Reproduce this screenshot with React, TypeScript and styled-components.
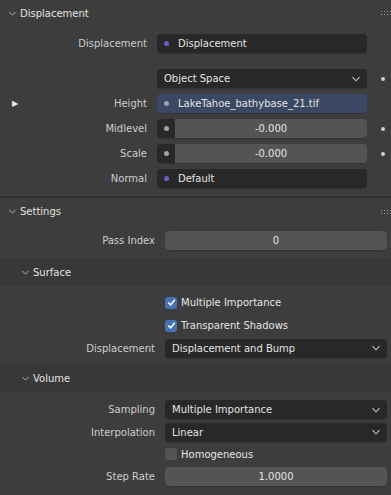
import { createGlobalStyle } from "styled-components";
import styled from "styled-components";

const GlobalStyle = createGlobalStyle`
  html, body {
    margin: 0;
    padding: 0;
    background: #3d3d3d;
  }
  body {
    font-family: "DejaVu Sans", "Liberation Sans", sans-serif;
    font-size: 10px;
    color: #cccccc;
  }
`;

const Chevron = ({ size = 9, color = "#b0b0b0" }: { size?: number; color?: string }) => (
  <svg width={size} height={size} viewBox="0 0 10 10">
    <path d="M1.5 3.2 L5 6.8 L8.5 3.2" fill="none" stroke={color} strokeWidth="1.1" />
  </svg>
);

const DragHandle = () => (
  <svg width="11" height="6" viewBox="0 0 11 6">
    {[0, 1, 2, 3].map((c) =>
      [0, 1].map((r) => (
        <rect key={`${c}-${r}`} x={1 + c * 3} y={1 + r * 3} width="1" height="1" fill="#9a9a9a" />
      ))
    )}
  </svg>
);

const CheckMark = () => (
  <svg width="11" height="11" viewBox="0 0 11 11">
    <path d="M2.3 5.6 L4.6 7.9 L8.8 2.8" fill="none" stroke="#ffffff" strokeWidth="1.6" />
  </svg>
);

const Page = styled.div`
  width: 391px;
  height: 495px;
  overflow: hidden;
  background: #3d3d3d;
`;

const Panel = styled.section`
  display: flex;
  flex-direction: column;
`;

const Separator = styled.div`
  height: 2px;
  background: #303030;
`;

const Header = styled.div<{ $sub?: boolean; $h: number }>`
  display: flex;
  align-items: center;
  height: ${(p) => p.$h}px;
  padding-left: ${(p) => (p.$sub ? 21 : 8)}px;
  background: ${(p) => (p.$sub ? "#383838" : "#3d3d3d")};
  color: #e2e2e2;
  font-size: 10px;
  gap: 3px;

  .handle {
    margin-left: auto;
    display: flex;
  }
`;

const Body = styled.div<{ $top: number; $bottom?: number }>`
  display: flex;
  flex-direction: column;
  padding-top: ${(p) => p.$top}px;
  padding-bottom: ${(p) => p.$bottom ?? 0}px;
`;

const Row = styled.div<{ $h: number }>`
  display: flex;
  align-items: center;
  height: ${(p) => p.$h}px;
`;

const Spacer = styled.div<{ $h: number }>`
  height: ${(p) => p.$h}px;
`;

const Label = styled.div<{ $w: number }>`
  width: ${(p) => p.$w}px;
  margin-right: 10px;
  display: flex;
  align-items: center;
  justify-content: flex-end;
  white-space: nowrap;
  color: #cdcdcd;
`;

const ExpandArrow = styled.span`
  margin-right: auto;
  padding-left: 12px;
  color: #e8e8e8;
  font-size: 8px;
`;

const Field = styled.div<{ $w: number; $bg?: string }>`
  width: ${(p) => p.$w}px;
  height: 19px;
  box-sizing: border-box;
  border-radius: 4px;
  background: ${(p) => p.$bg ?? "#282828"};
  display: flex;
  align-items: center;
  padding: 0 6px;
  color: #e4e4e4;
  white-space: nowrap;
  box-shadow: 0 1px 0 #333333;
`;

const Dot = styled.span<{ $color: string }>`
  width: 5px;
  height: 5px;
  border-radius: 50%;
  background: ${(p) => p.$color};
  margin-right: 9px;
  margin-left: 1px;
  flex-shrink: 0;
`;

const DropText = styled.span`
  flex: 1;
  padding-left: 1px;
`;

const SliderField = styled.div<{ $w: number }>`
  width: ${(p) => p.$w}px;
  height: 19px;
  display: flex;
  border-radius: 4px;
  overflow: hidden;
  box-shadow: 0 1px 0 #333333;
`;

const SocketPart = styled.div`
  width: 18px;
  background: #282828;
  display: flex;
  align-items: center;
  justify-content: center;

  span {
    margin: 0;
  }
`;

const SliderPart = styled.div`
  flex: 1;
  background: #545454;
  display: flex;
  align-items: center;
  justify-content: center;
  color: #e4e4e4;
`;

const NumberField = styled.div<{ $w: number }>`
  width: ${(p) => p.$w}px;
  height: 19px;
  border-radius: 4px;
  background: #545454;
  display: flex;
  align-items: center;
  justify-content: center;
  color: #e4e4e4;
  box-shadow: 0 1px 0 #333333;
`;

const Decorator = styled.div`
  width: 16px;
  margin-left: 8px;
  display: flex;
  justify-content: center;

  &::after {
    content: "";
    width: 4px;
    height: 4px;
    border-radius: 50%;
    background: #cfcfcf;
  }
`;

const CheckRow = styled.div<{ $h: number }>`
  display: flex;
  align-items: center;
  height: ${(p) => p.$h}px;
  padding-left: 165px;
  color: #e4e4e4;
  gap: 4px;
`;

const Box = styled.span<{ $on: boolean }>`
  width: 12px;
  height: 12px;
  border-radius: 3px;
  background: ${(p) => (p.$on ? "#4772b3" : "#545454")};
  display: flex;
  align-items: center;
  justify-content: center;
`;

const D_LABEL = 147;
const D_FIELD = 210;
const S_LABEL = 155;
const S_FIELD = 222;

const App = () => {
  return (
    <Page>
      <GlobalStyle />
      <Panel>
        <Header $h={26}>
          <Chevron />
          <span>Displacement</span>
          <span className="handle">
            <DragHandle />
          </span>
        </Header>
        <Body $top={5} $bottom={5}>
          <Row $h={25}>
            <Label $w={D_LABEL}>Displacement</Label>
            <Field $w={D_FIELD}>
              <Dot $color="#6363c7" />
              Displacement
            </Field>
          </Row>
          <Spacer $h={10} />
          <Row $h={25}>
            <Label $w={D_LABEL} />
            <Field $w={D_FIELD}>
              <DropText>Object Space</DropText>
              <Chevron size={10} color="#c8c8c8" />
            </Field>
            <Decorator />
          </Row>
          <Row $h={25}>
            <Label $w={D_LABEL}>
              <ExpandArrow>▶</ExpandArrow>
              Height
            </Label>
            <Field $w={D_FIELD} $bg="#3a4863">
              <Dot $color="#a1a1a1" />
              LakeTahoe_bathybase_21.tif
            </Field>
          </Row>
          <Row $h={25}>
            <Label $w={D_LABEL}>Midlevel</Label>
            <SliderField $w={D_FIELD}>
              <SocketPart>
                <Dot $color="#a1a1a1" />
              </SocketPart>
              <SliderPart>-0.000</SliderPart>
            </SliderField>
            <Decorator />
          </Row>
          <Row $h={25}>
            <Label $w={D_LABEL}>Scale</Label>
            <SliderField $w={D_FIELD}>
              <SocketPart>
                <Dot $color="#a1a1a1" />
              </SocketPart>
              <SliderPart>-0.000</SliderPart>
            </SliderField>
            <Decorator />
          </Row>
          <Row $h={25}>
            <Label $w={D_LABEL}>Normal</Label>
            <Field $w={D_FIELD}>
              <Dot $color="#6363c7" />
              Default
            </Field>
          </Row>
        </Body>
      </Panel>
      <Separator />
      <Panel>
        <Header $h={27}>
          <Chevron />
          <span>Settings</span>
          <span className="handle">
            <DragHandle />
          </span>
        </Header>
        <Body $top={4}>
          <Row $h={23}>
            <Label $w={S_LABEL}>Pass Index</Label>
            <NumberField $w={S_FIELD}>0</NumberField>
          </Row>
          <Spacer $h={6} />
          <Header $sub $h={28}>
            <Chevron />
            <span>Surface</span>
          </Header>
          <Spacer $h={5} />
          <CheckRow $h={23}>
            <Box $on>
              <CheckMark />
            </Box>
            Multiple Importance
          </CheckRow>
          <CheckRow $h={23}>
            <Box $on>
              <CheckMark />
            </Box>
            Transparent Shadows
          </CheckRow>
          <Row $h={22}>
            <Label $w={S_LABEL}>Displacement</Label>
            <Field $w={S_FIELD}>
              <DropText>Displacement and Bump</DropText>
              <Chevron size={10} color="#c8c8c8" />
            </Field>
          </Row>
          <Spacer $h={6} />
          <Header $sub $h={27}>
            <Chevron />
            <span>Volume</span>
          </Header>
          <Spacer $h={6} />
          <Row $h={23}>
            <Label $w={S_LABEL}>Sampling</Label>
            <Field $w={S_FIELD}>
              <DropText>Multiple Importance</DropText>
              <Chevron size={10} color="#c8c8c8" />
            </Field>
          </Row>
          <Row $h={22}>
            <Label $w={S_LABEL}>Interpolation</Label>
            <Field $w={S_FIELD}>
              <DropText>Linear</DropText>
              <Chevron size={10} color="#c8c8c8" />
            </Field>
          </Row>
          <CheckRow $h={22}>
            <Box $on={false} />
            Homogeneous
          </CheckRow>
          <Row $h={22}>
            <Label $w={S_LABEL}>Step Rate</Label>
            <NumberField $w={S_FIELD}>1.0000</NumberField>
          </Row>
        </Body>
      </Panel>
    </Page>
  );
};

export default App;
